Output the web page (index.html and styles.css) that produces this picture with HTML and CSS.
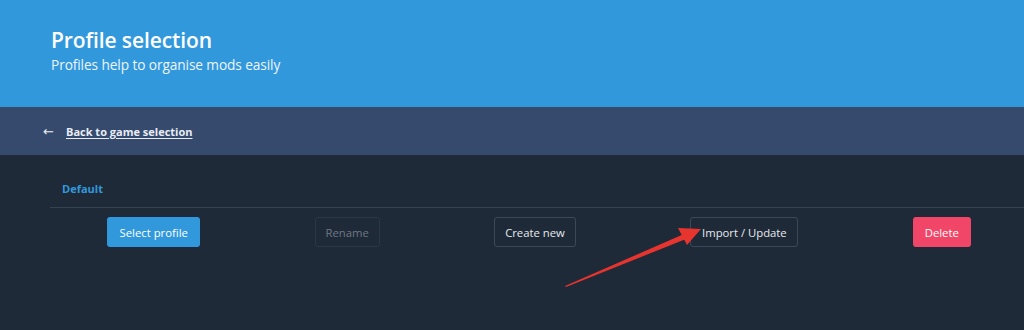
FILE: index.html
```html
<!DOCTYPE html>
<html>
<head>
<meta charset="utf-8">
<link rel="stylesheet" href="styles.css">
</head>
<body>
<section class="hero">
  <h1 class="title">Profile selection</h1>
  <p class="subtitle">Profiles help to organise mods easily</p>
</section>
<nav class="navbar">
  <span class="arrow">&#8592;</span>
  <a class="back" href="#">Back to game selection</a>
</nav>
<main class="content">
  <div class="profile-name">Default</div>
  <div class="actions">
    <button class="btn btn-info">Select profile</button>
    <button class="btn btn-disabled">Rename</button>
    <button class="btn btn-outline btn-create">Create new</button>
    <button class="btn btn-outline btn-import">Import / Update</button>
    <button class="btn btn-danger">Delete</button>
  </div>
</main>
<svg class="annotation" width="1024" height="330" viewBox="0 0 1024 330">
  <polygon points="565,286 684,234 686,239 566,287" fill="#e8342f"/>
  <polygon points="701,229 678,228 687,245" fill="#e8342f"/>
</svg>
</body>
</html>
```
FILE: styles.css
```css
* { box-sizing: border-box; }
html, body { margin: 0; padding: 0; }
body {
  width: 1024px;
  height: 330px;
  overflow: hidden;
  background: #1f2a38;
  font-family: "Open Sans", "Noto Sans", sans-serif;
  position: relative;
}
.hero {
  background: #3298dc;
  height: 107px;
  padding: 26px 0 0 51px;
}
.title {
  margin: 0;
  color: #fff;
  font-size: 21px;
  font-weight: 600;
  line-height: 28px;
  letter-spacing: -0.1px;
}
.subtitle {
  margin: 0;
  color: #eef5fc;
  font-size: 13.7px;
  line-height: 21px;
  letter-spacing: -0.1px;
}
.navbar {
  background: #364a6e;
  height: 48px;
  display: flex;
  align-items: center;
  padding-left: 43px;
}
.arrow {
  color: #e8edf5;
  font-size: 13px;
  font-family: "DejaVu Sans", sans-serif;
  width: 23px;
  line-height: 1;
}
.back {
  color: #e8edf5;
  font-size: 11px;
  font-weight: 700;
  text-decoration: underline;
  text-underline-offset: 2px;
}
.content {
  padding: 26px 0 0 50px;
}
.profile-name {
  color: #3298dc;
  font-size: 11px;
  font-weight: 700;
  padding-left: 12px;
  line-height: 16px;
  padding-bottom: 10px;
  border-bottom: 1px solid #344150;
}
.actions {
  display: flex;
  justify-content: space-around;
  align-items: center;
  margin-right: -4px;
  padding-top: 9px;
}
.btn {
  height: 30px;
  font-family: inherit;
  font-size: 11.3px;
  border-radius: 3px;
  padding: 1px 0 0;
  border: 1px solid transparent;
  background: transparent;
  line-height: 1;
  white-space: nowrap;
  text-align: center;
}
.btn-info {
  background: #3298dc;
  color: #fff;
  width: 93px;
}
.btn-disabled {
  border-color: #2b3645;
  color: #6e7785;
  width: 65px;
}
.btn-outline {
  border-color: #3c4858;
  color: #e6e9ee;
}
.btn-create { width: 82px; }
.btn-import { width: 108px; }
.btn-danger {
  background: #f14668;
  color: #fff;
  width: 58px;
}
.annotation {
  position: absolute;
  left: 0;
  top: 0;
  pointer-events: none;
}
```
